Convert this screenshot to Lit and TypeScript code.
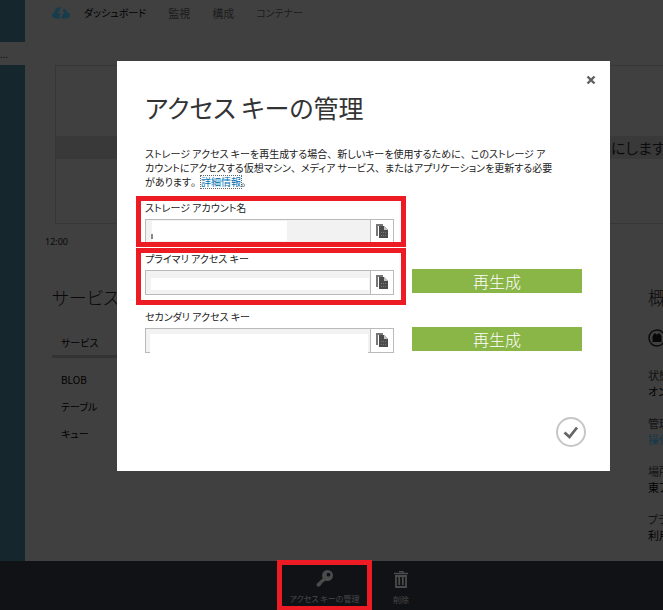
import { LitElement, html, css, nothing } from "lit";
import { customElement, property } from "lit/decorators.js";

const copyIcon = html`<svg class="copy-icon" width="12" height="14" viewBox="0 0 12 14" aria-hidden="true">
  <path d="M0 0H7V2H2V12H0Z" fill="#777" />
  <path d="M3 2H8L12 6V14H3Z" fill="#4c4c4c" />
  <path d="M8 2V6H12Z" fill="#c4c4c4" />
  <path d="M5 8h1v1H5zM7 8h1v1H7zM9 8h1v1H9zM5 11h1v1H5zM7 11h1v1H7zM9 11h1v1H9z" fill="#777" />
</svg>`;

const fontStack = css`"Noto Sans CJK JP", "Noto Sans", sans-serif`;

@customElement("key-field")
class KeyField extends LitElement {
  @property() label = "";
  @property() variant = "";
  @property({ type: Boolean }) marked = false;
  @property({ type: Boolean }) renewable = false;

  static styles = css`
    :host {
      display: grid;
      grid-template-columns: minmax(0, 270fr) minmax(0, 170fr);
      column-gap: 6px;
      align-items: start;
    }
    .box {
      box-sizing: border-box;
      border: 5px solid transparent;
      padding: 0 7px 5px 4px;
    }
    .marked { border-color: #ed1c24; }
    .account { padding-top: 1px; padding-bottom: 0; }
    .caption { display: block; height: 17px; line-height: 12px; font-size: 10px; color: #222; }
    .row { display: flex; height: 25px; position: relative; overflow: hidden; }
    .account .row { height: 23px; }
    input {
      flex: 1;
      min-width: 0;
      height: 25px;
      box-sizing: border-box;
      border: 1px solid #bababa;
      background: #f2f2f2;
      padding: 0 4px;
      border-radius: 0;
      font: inherit;
      outline: none;
    }
    .copy {
      width: 23px;
      height: 25px;
      box-sizing: border-box;
      border: 1px solid #bababa;
      border-left: 0;
      background: #fff;
      padding: 0 0 2px;
      display: grid;
      place-items: center;
    }
    .mask { position: absolute; background: #fff; }
    .account .mask { left: 7px; top: 2px; width: 135px; height: 20px; }
    .account .mask::before { content: ""; position: absolute; left: -1px; top: 13px; width: 2px; height: 5px; background: #888; }
    .primary .mask { left: 6px; right: 25px; top: 8px; height: 12px; }
    .secondary .mask { left: 5px; right: 26px; top: 6px; bottom: 0; }
    .renew {
      margin-top: 21px;
      height: 24px;
      border: 0;
      padding: 0;
      background: #8ab547;
      color: #fff;
      font-family: inherit;
      font-size: 16px;
      font-weight: 300;
      line-height: 22px;
    }
  `;

  render() {
    return html`
      <div class="box ${this.variant} ${this.marked ? "marked" : ""}">
        <label class="caption" for="value">${this.label}</label>
        <div class="row">
          <input id="value" type="text" readonly />
          <span class="mask"></span>
          <button class="copy" type="button" aria-label="コピー">${copyIcon}</button>
        </div>
      </div>
      ${this.renewable ? html`<button class="renew" type="button">再生成</button>` : nothing}
    `;
  }
}

@customElement("app-root")
class AppRoot extends LitElement {
  static styles = css`
    :host {
      display: block;
      font-family: ${fontStack};
      font-feature-settings: "palt";
      font-size: 11px;
      color: #111;
    }
    .page {
      position: relative;
      display: flex;
      flex-direction: column;
      min-height: 100vh;
      overflow: hidden;
      background: #404040;
    }
    .body { flex: 1; display: flex; }
    .side { width: 25px; display: flex; flex-direction: column; }
    .side-top { height: 42px; background: #15262d; }
    .side-current { height: 23px; line-height: 23px; font-size: 10px; overflow: hidden; color: #111; }
    .side-rest { flex: 1; background: #15262d; }
    .main { flex: 1; min-width: 0; }
    nav { display: flex; align-items: center; gap: 22px; height: 26px; padding-left: 27px; }
    nav a { color: #1c1c1c; text-decoration: none; line-height: 16px; }
    nav .kana { font-size: 10px; }
    nav .active { color: #000; }
    .brand { display: block; margin-right: -8px; }
    .chart {
      margin: 39px 0 0 30px;
      height: 157px;
      border: 1px solid #373737;
      border-right: 0;
    }
    .notice {
      margin-top: 70px;
      height: 23px;
      line-height: 23px;
      background: #393939;
      font-size: 15px;
      color: #0c0c10;
      display: flex;
      justify-content: flex-end;
    }
    .notice span { width: 52px; white-space: nowrap; }
    .tick { padding-left: 20px; margin-top: 10px; line-height: 16px; font-size: 9px; font-family: "Noto Sans", sans-serif; color: #080808; }
    .columns { display: flex; padding-left: 27px; margin-top: 34px; }
    .services { flex: 1; margin-right: 60px; }
    h2 { margin: 0; font-size: 18px; font-weight: 300; line-height: 26px; color: #0a0a0a; white-space: nowrap; }
    table { width: 100%; margin-top: 21px; border-collapse: collapse; font-size: 10px; }
    th, td { text-align: left; font-weight: 400; padding: 0 0 0 9px; height: 27px; line-height: 16px; color: #000; }
    th { height: 24px; border-bottom: 3px solid #333; }
    tbody tr:first-child td { padding-top: 8px; }
    .summary { width: 15px; white-space: nowrap; }
    .round { display: block; margin-top: 19px; overflow: visible; }
    dl { margin: 20px 0 0; line-height: 16px; }
    dt, dd { margin: 0; }
    dd { margin-bottom: 16px; color: #000; }
    dd a { color: #12384a; text-decoration: none; }
    footer { height: 49px; background: #111216; display: flex; padding-left: 277px; gap: 14px; align-items: flex-start; }
    .command {
      border: 0;
      padding: 10px 0 0;
      background: none;
      width: 30px;
      color: #494949;
      font-family: inherit;
      font-feature-settings: inherit;
      font-size: 8px;
      line-height: 12px;
      white-space: nowrap;
      display: flex;
      flex-direction: column;
      align-items: center;
      gap: 6px;
    }
    .chosen {
      box-sizing: border-box;
      position: relative;
      width: 95px;
      height: 50px;
      margin-top: -1px;
      border: 5px solid #ed1c24;
      border-bottom-width: 4px;
      padding-top: 5px;
    }
    .layer { position: absolute; inset: 0; padding: 61px 53px 0 117px; }
    .dialog { position: relative; background: #fff; padding: 28px 28px 24px; color: #222; }
    .close { position: absolute; right: 14px; top: 14px; width: 10px; height: 10px; border: 0; padding: 0; background: none; display: block; }
    .close svg { display: block; }
    h1 { margin: 0; font-size: 25px; font-weight: 400; line-height: 36px; color: #333; }
    .lead { margin: 22px -8px 0 0; line-height: 14px; font-size: 10px; }
    .mark { font-feature-settings: normal; }
    .lead a { color: #0072b5; text-decoration: none; outline: 1px dotted #666; display: inline-block; line-height: 12px; }
    form { margin: 7px 0 0 -9px; display: grid; row-gap: 1px; }
    .actions { display: flex; justify-content: flex-end; margin: 54px -4px 0 0; }
    .ok { border: 0; padding: 0; background: none; display: block; }
    .ok svg { display: block; }
  `;

  render() {
    const comma = html`<span class="mark">、</span>`;
    return html`
      <div class="page">
        <div class="body">
          <aside class="side">
            <div class="side-top"></div>
            <div class="side-current">...</div>
            <div class="side-rest"></div>
          </aside>
          <main class="main">
            <nav>
              <svg class="brand" width="18" height="12" viewBox="0 0 18 12" aria-hidden="true">
                <path d="M4 11.500C1.500 11.500 0 10.300 0 8.500C0 6.900 1 5.900 2.400 5.600C2.400 2.500 4.500 .3 7.600 .3C8.200 .3 8.700 .4 9.200 .6L6 6.200H8.600L7.400 11.500ZM8.400 11.500L12.600 5H10.200L11.800 1.400C13.700 2 14.600 3.400 14.700 5.200C16.700 5.400 18 6.600 18 8.400C18 10.300 16.700 11.500 14.500 11.500Z" fill="#173d4d" />
              </svg>
              <a class="kana active" href="#dashboard">ダッシュボード</a>
              <a href="#monitor">監視</a>
              <a href="#configure">構成</a>
              <a class="kana" href="#containers">コンテナー</a>
            </nav>
            <div class="chart"><div class="notice"><span>にします</span></div></div>
            <div class="tick">12:00</div>
            <div class="columns">
              <section class="services">
                <h2>サービス</h2>
                <table>
                  <thead><tr><th>サービス</th></tr></thead>
                  <tbody>
                    <tr><td>BLOB</td></tr>
                    <tr><td>テーブル</td></tr>
                    <tr><td>キュー</td></tr>
                  </tbody>
                </table>
              </section>
              <section class="summary">
                <h2>概</h2>
                <svg class="round" width="18" height="18" viewBox="0 0 18 18" aria-hidden="true">
                  <circle cx="9" cy="9" r="8" fill="none" stroke="#0c0c0c" stroke-width="1.500" />
                  <path d="M4.500 13V7.500L6 4.500H8L9 6L10 4.500H12L13.500 7.500V13Z" fill="#080808" />
                </svg>
                <dl>
                  <dt>状態</dt><dd>オン</dd>
                  <dt>管理</dt><dd><a href="#operations">操作</a></dd>
                  <dt>場所</dt><dd>東ア</dd>
                  <dt>プラ</dt><dd>利用</dd>
                </dl>
              </section>
            </div>
          </main>
        </div>
        <footer>
          <button class="command chosen" type="button">
            <svg width="18" height="17" viewBox="0 0 18 17" aria-hidden="true">
              <path fill-rule="evenodd" d="M11.500 0A5.500 5.500 0 0 1 11.500 11C10.700 11 10 10.900 9.300 10.500L7.500 12.200L6.500 12.200V13.500L5.200 13.700V15L3.500 16.500H1L.5 14L6.800 8.200A5.500 5.500 0 0 1 11.500 0ZM12.500 2.800A1.900 1.900 0 1 0 12.500 6.600A1.900 1.900 0 1 0 12.500 2.800Z" fill="#4b4b4b" />
            </svg>
            <span>アクセス キーの管理</span>
          </button>
          <button class="command" type="button">
            <svg width="14" height="17" viewBox="0 0 14 17" aria-hidden="true">
              <path d="M5 .5H9V2M0 2.500H14" fill="none" stroke="#4b4b4b" stroke-width="1.500" />
              <path d="M2 5V16H12V5ZM1 5H13M5.200 6V14M8.800 6V14" fill="none" stroke="#4b4b4b" stroke-width="1.800" />
            </svg>
            <span>削除</span>
          </button>
        </footer>
        <div class="layer">
          <div class="dialog" role="dialog" aria-labelledby="title">
            <button class="close" type="button" aria-label="閉じる">
              <svg width="10" height="10" viewBox="0 0 10 10"><path d="M1.500 1.500L8.500 8.500M8.500 1.500L1.500 8.500" stroke="#606060" stroke-width="2.400" /></svg>
            </button>
            <h1 id="title">アクセス キーの管理</h1>
            <p class="lead">
              ストレージ アクセス キーを再生成する場合${comma}新しいキーを使用するために${comma}このストレージ ア<br />カウントにアクセスする仮想マシン${comma}メディア サービス${comma}またはアプリケーションを更新する必要<br />があります<span class="mark">。</span><a href="#details">詳細情報</a>。
            </p>
            <form>
              <key-field label="ストレージ アカウント名" variant="account" marked></key-field>
              <key-field label="プライマリ アクセス キー" variant="primary" marked renewable></key-field>
              <key-field label="セカンダリ アクセス キー" variant="secondary" renewable></key-field>
            </form>
            <div class="actions">
              <button class="ok" type="button" aria-label="完了">
                <svg width="30" height="30" viewBox="0 0 30 30">
                  <circle cx="15" cy="15" r="14" fill="none" stroke="#c6c6c6" stroke-width="2" />
                  <path d="M8.500 15.500L13.500 20L21 10.500" fill="none" stroke="#666" stroke-width="2.800" />
                </svg>
              </button>
            </div>
          </div>
        </div>
      </div>
    `;
  }
}
